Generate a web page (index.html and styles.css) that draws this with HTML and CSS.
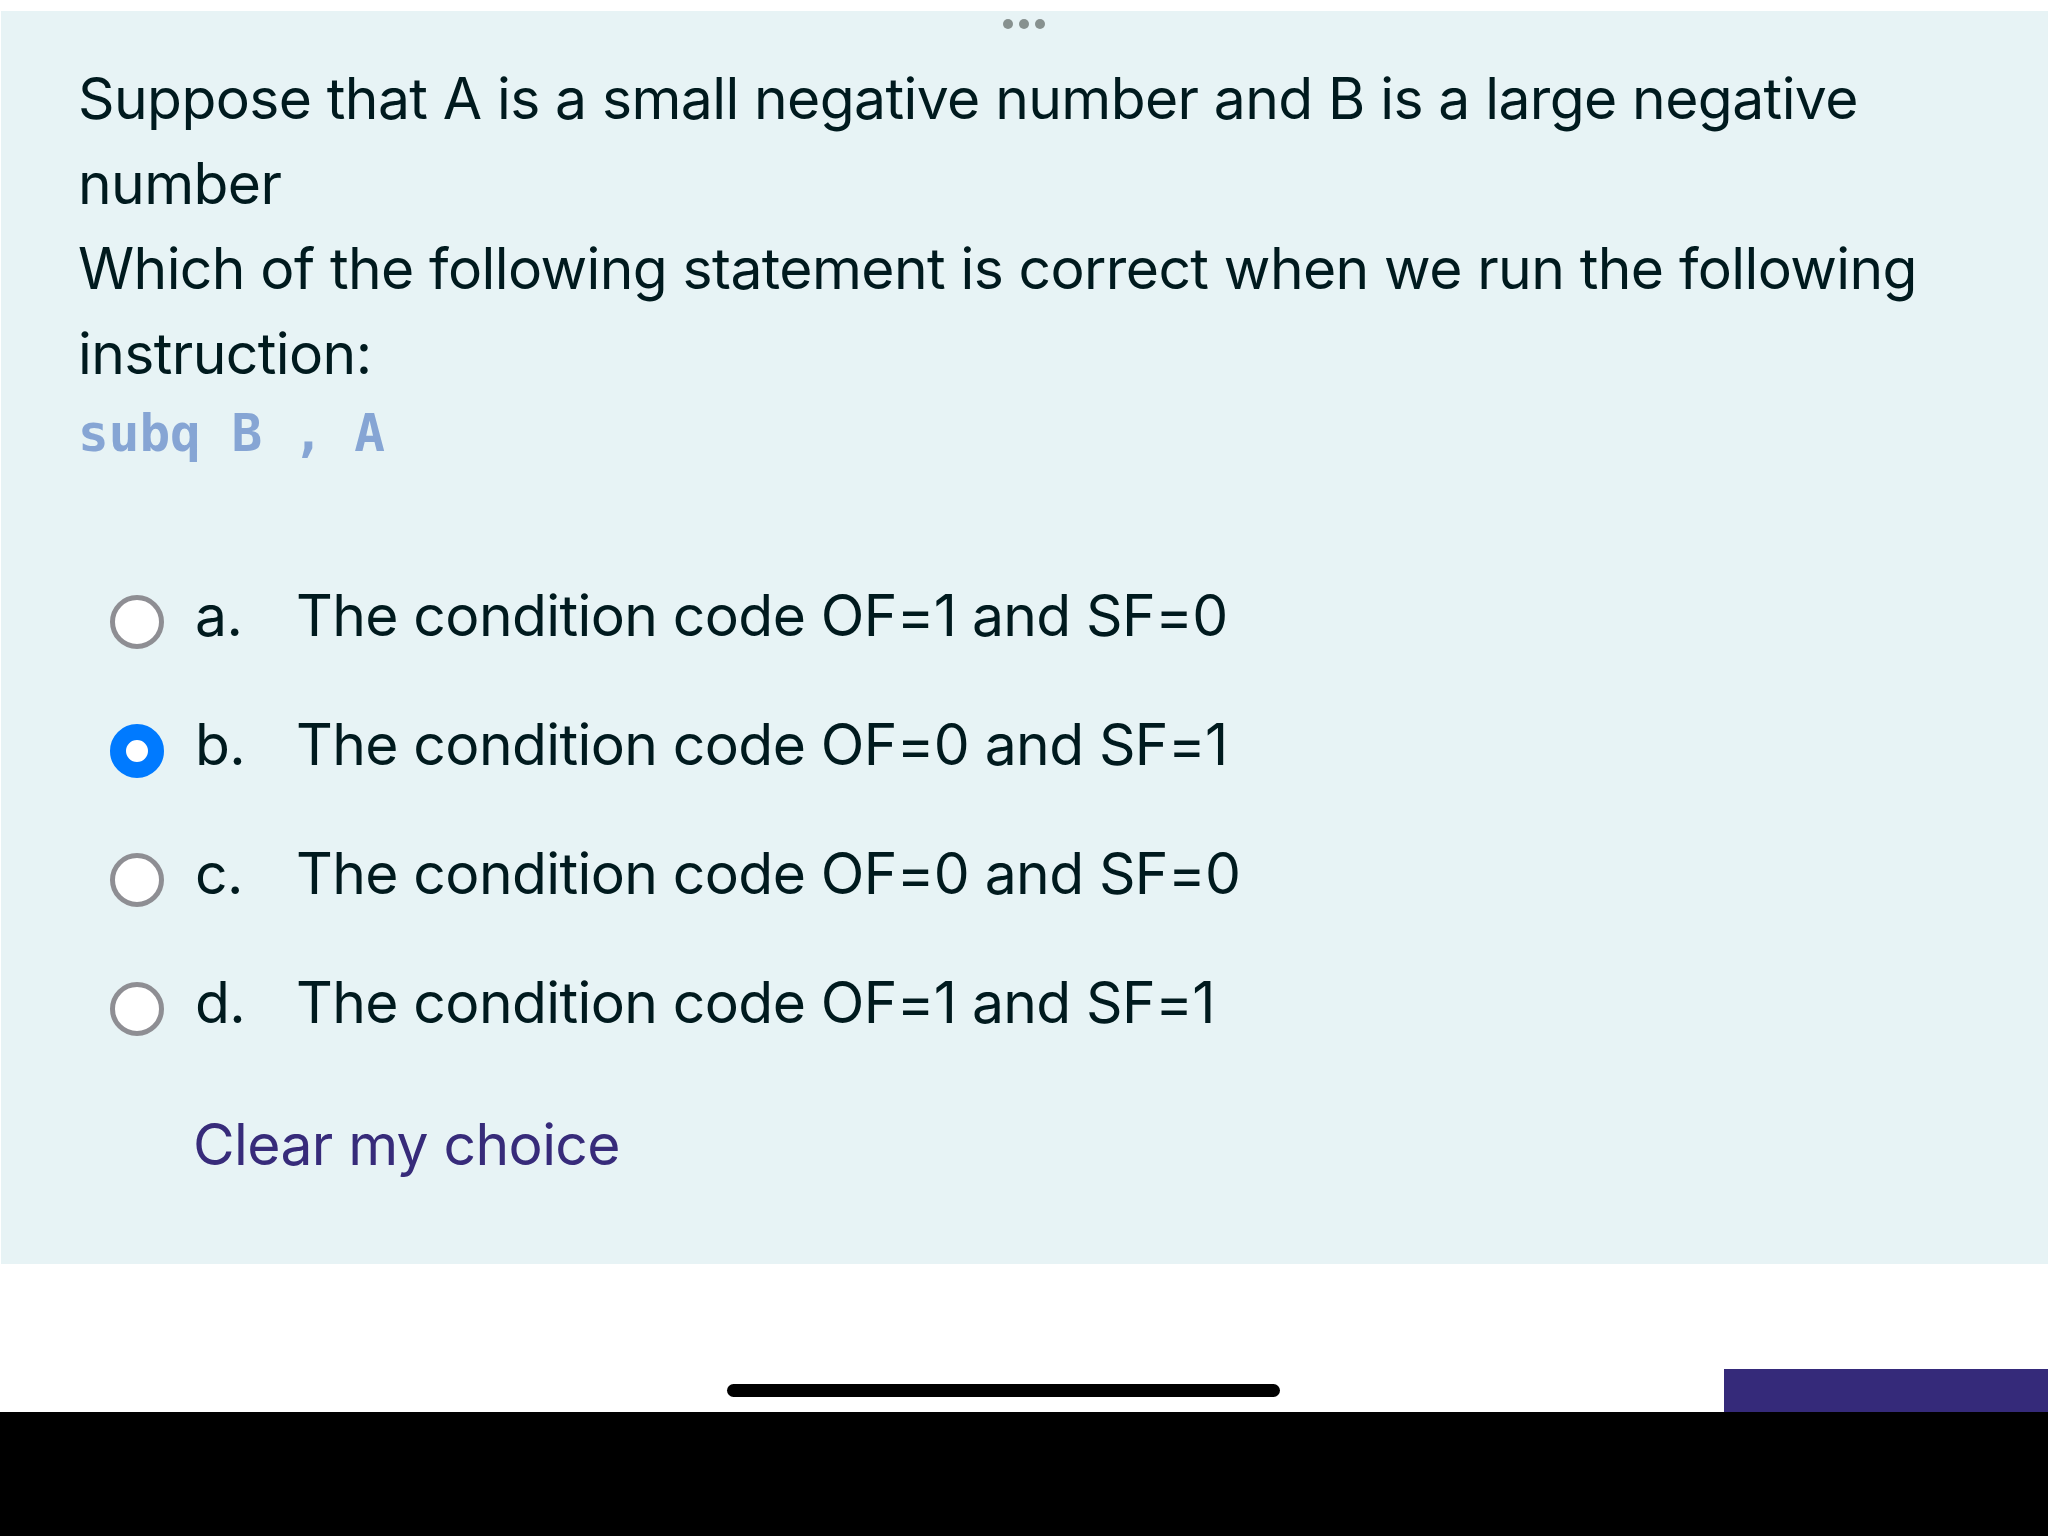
FILE: index.html
```html
<!DOCTYPE html>
<html lang="en">
<head>
<meta charset="utf-8">
<title>Question</title>
<link rel="stylesheet" href="styles.css">
</head>
<body>
<div class="page">
  <div class="formulation">
    <div class="handle"><span class="dot"></span><span class="dot"></span><span class="dot"></span></div>
    <div class="qtext">
      <p>Suppose that A is a small negative number and B is a large negative number</p>
      <p>Which of the following statement is correct when we run the following instruction:</p>
      <div class="code">subq B , A</div>
    </div>
    <div class="answers">
      <div class="opt"><span class="radio"></span><span class="letter">a.</span><span class="label">The condition code OF=1 and SF=0</span></div>
      <div class="opt"><span class="radio checked"></span><span class="letter">b.</span><span class="label">The condition code OF=0 and SF=1</span></div>
      <div class="opt"><span class="radio"></span><span class="letter">c.</span><span class="label">The condition code OF=0 and SF=0</span></div>
      <div class="opt"><span class="radio"></span><span class="letter">d.</span><span class="label">The condition code OF=1 and SF=1</span></div>
    </div>
    <a class="clear" href="#">Clear my choice</a>
  </div>
  <div class="footer">
    <div class="home-indicator"></div>
    <div class="next-btn"></div>
  </div>
  <div class="blackbar"></div>
</div>
</body>
</html>
```
FILE: styles.css
```css
html, body {
  margin: 0;
  padding: 0;
  background: #ffffff;
}
.page {
  width: 2048px;
  height: 1536px;
  display: flex;
  flex-direction: column;
  font-family: Inter, "Noto Sans", sans-serif;
  color: #001a1e;
}
.formulation {
  margin-top: 11px;
  margin-left: 1px;
  height: 1253px;
  background: #e7f3f5;
  box-sizing: border-box;
  padding: 0 40px 0 77px;
  display: flex;
  flex-direction: column;
}
.handle {
  display: flex;
  justify-content: center;
  gap: 6px;
  padding-top: 8px;
  padding-right: 38px;
  height: 10px;
}
.dot {
  width: 10px;
  height: 10px;
  border-radius: 50%;
  background: #87918f;
}
.qtext {
  margin-top: 27px;
  font-size: 57px;
  line-height: 85px;
  letter-spacing: -0.6px;
}
.qtext p {
  margin: 0;
}
.code {
  font-family: "DejaVu Sans Mono", monospace;
  font-weight: bold;
  font-size: 51px;
  line-height: 75px;
  letter-spacing: 0;
  color: #86a5d4;
  white-space: pre;
}
.answers {
  margin-top: 102px;
  padding-left: 32px;
  display: flex;
  flex-direction: column;
  gap: 44px;
  font-size: 57px;
  line-height: 85px;
  letter-spacing: -0.6px;
}
.opt {
  display: flex;
  align-items: flex-start;
}
.radio {
  width: 54px;
  height: 54px;
  box-sizing: border-box;
  border-radius: 50%;
  border: 5px solid #8e8e93;
  background: #ffffff;
  margin-top: 22px;
  flex: none;
}
.radio.checked {
  border: 16px solid #007aff;
}
.letter {
  margin-left: 31px;
  width: 101px;
}
.clear {
  margin-top: 57px;
  margin-left: 115px;
  font-size: 57px;
  line-height: 85px;
  letter-spacing: -0.6px;
  color: #372b7a;
  text-decoration: none;
  align-self: flex-start;
}
.footer {
  position: relative;
  height: 148px;
  display: flex;
  justify-content: flex-end;
  align-items: flex-end;
}
.home-indicator {
  position: absolute;
  left: 727px;
  top: 120px;
  width: 553px;
  height: 13px;
  border-radius: 7px;
  background: #000000;
}
.next-btn {
  width: 324px;
  height: 43px;
  background: #352a7a;
}
.blackbar {
  height: 124px;
  background: #000000;
}
```
